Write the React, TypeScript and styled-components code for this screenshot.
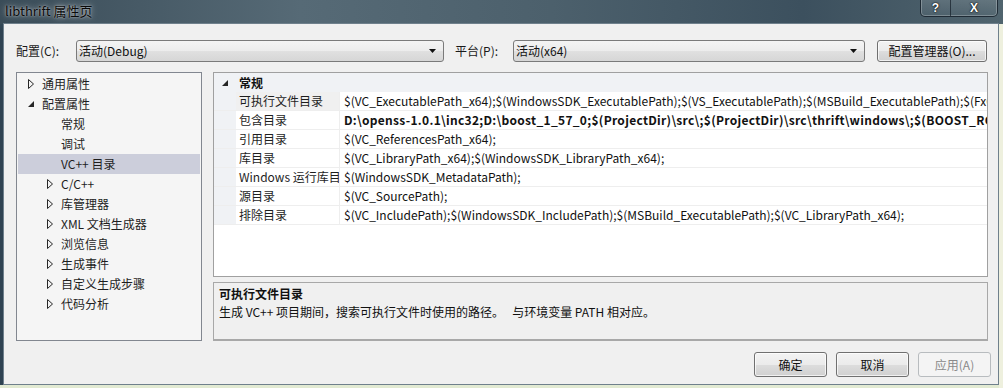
import React from 'react';
import styled, { createGlobalStyle } from 'styled-components';

const FONT = `"Noto Sans CJK SC", "Noto Sans", "Liberation Sans", sans-serif`;

const GlobalStyle = createGlobalStyle`
  html, body {
    margin: 0;
    padding: 0;
    background: #2f4251;
  }
  body {
    font-family: ${FONT};
    font-size: 12px;
    color: #1e1e1e;
  }
`;

const treeItems = [
  { label: '通用属性', level: 0, arrow: 'closed' },
  { label: '配置属性', level: 0, arrow: 'open' },
  { label: '常规', level: 1, arrow: 'none' },
  { label: '调试', level: 1, arrow: 'none' },
  { label: 'VC++ 目录', level: 1, arrow: 'none', selected: true },
  { label: 'C/C++', level: 1, arrow: 'closed' },
  { label: '库管理器', level: 1, arrow: 'closed' },
  { label: 'XML 文档生成器', level: 1, arrow: 'closed' },
  { label: '浏览信息', level: 1, arrow: 'closed' },
  { label: '生成事件', level: 1, arrow: 'closed' },
  { label: '自定义生成步骤', level: 1, arrow: 'closed' },
  { label: '代码分析', level: 1, arrow: 'closed' },
];

const props = [
  {
    name: '可执行文件目录',
    value:
      '$(VC_ExecutablePath_x64);$(WindowsSDK_ExecutablePath);$(VS_ExecutablePath);$(MSBuild_ExecutablePath);$(FxCopDir);$(PATH);',
    selected: true,
  },
  {
    name: '包含目录',
    value:
      'D:\\openss-1.0.1\\inc32;D:\\boost_1_57_0;$(ProjectDir)\\src\\;$(ProjectDir)\\src\\thrift\\windows\\;$(BOOST_ROOT);$(IncludePath)',
    bold: true,
  },
  { name: '引用目录', value: '$(VC_ReferencesPath_x64);' },
  { name: '库目录', value: '$(VC_LibraryPath_x64);$(WindowsSDK_LibraryPath_x64);' },
  { name: 'Windows 运行库目录', value: '$(WindowsSDK_MetadataPath);' },
  { name: '源目录', value: '$(VC_SourcePath);' },
  {
    name: '排除目录',
    value: '$(VC_IncludePath);$(WindowsSDK_IncludePath);$(MSBuild_ExecutablePath);$(VC_LibraryPath_x64);',
  },
];

function Arrow({ kind }: { kind: string }) {
  if (kind === 'open') {
    return (
      <svg width="6" height="6" viewBox="0 0 6 6">
        <polygon points="6,0 6,6 0,6" fill="#262626" />
      </svg>
    );
  }
  if (kind === 'closed') {
    return (
      <svg width="6" height="10" viewBox="0 0 6 10">
        <polygon points="0.5,0.5 5.5,5 0.5,9.5" fill="none" stroke="#262626" strokeWidth="1" />
      </svg>
    );
  }
  return null;
}

function DropArrow() {
  return (
    <svg width="7" height="4" viewBox="0 0 7 4">
      <polygon points="0,0 7,0 3.5,4" fill="#111" />
    </svg>
  );
}

export default function App() {
  return (
    <>
      <GlobalStyle />
      <Window>
        <TitleBar>
          <Title>libthrift 属性页</Title>
          <CaptionGroup>
            <CaptionButton $w={29}>?</CaptionButton>
            <CaptionButton $w={46}>X</CaptionButton>
          </CaptionGroup>
        </TitleBar>
        <Client>
          <Toolbar>
            <Label $w={60}>配置(C):</Label>
            <Combo $w={368}>
              <span>活动(Debug)</span>
              <DropArrow />
            </Combo>
            <Label $w={58} $ml={11}>
              平台(P):
            </Label>
            <Combo $w={352}>
              <span>活动(x64)</span>
              <DropArrow />
            </Combo>
            <Button $w={110} $ml={12}>
              配置管理器(O)...
            </Button>
          </Toolbar>

          <Main>
            <Tree>
              {treeItems.map(item => (
                <TreeRow key={item.label} $level={item.level} $selected={!!item.selected}>
                  <ArrowSlot>
                    <Arrow kind={item.arrow} />
                  </ArrowSlot>
                  <span>{item.label}</span>
                </TreeRow>
              ))}
            </Tree>

            <RightColumn>
              <Grid>
                <CategoryRow>
                  <Gutter>
                    <Arrow kind="open" />
                  </Gutter>
                  <CategoryName>常规</CategoryName>
                </CategoryRow>
                {props.map(p => (
                  <PropRow key={p.name}>
                    <Gutter />
                    <NameCell $selected={!!p.selected}>{p.name}</NameCell>
                    <ValueCell $bold={!!p.bold}>{p.value}</ValueCell>
                  </PropRow>
                ))}
              </Grid>
              <Description>
                <DescTitle>可执行文件目录</DescTitle>
                <DescText>生成 VC++ 项目期间，搜索可执行文件时使用的路径。&nbsp;&nbsp;&nbsp;与环境变量 PATH 相对应。</DescText>
              </Description>
            </RightColumn>
          </Main>

          <Footer>
            <Button $w={73}>确定</Button>
            <Button $w={73}>取消</Button>
            <Button $w={73} $disabled>
              应用(A)
            </Button>
          </Footer>
        </Client>
      </Window>
    </>
  );
}

const Window = styled.div`
  width: 1003px;
  height: 388px;
  display: flex;
  flex-direction: column;
  overflow: hidden;
  background:
    linear-gradient(90deg, transparent 999px, #eef0de 999px),
    linear-gradient(180deg, transparent 385px, #e2ead2 385px),
    linear-gradient(180deg, #5d6f7a 0px, #3b4f5e 14px, #2f4352 30px, #2f4352 100%);
`;

const TitleBar = styled.div`
  height: 24px;
  display: flex;
  align-items: flex-start;
  background: linear-gradient(90deg, #3a4c58 0%, #566a76 30%, #4c606c 55%, #3c505e 80%, #50646e 100%);
`;

const Title = styled.div`
  margin: 3px 0 0 5px;
  font-size: 13px;
  line-height: 16px;
  color: #0a0a0a;
  text-shadow: 0 0 6px rgba(255, 255, 255, 0.7), 0 0 2px rgba(255, 255, 255, 0.6);
`;

const CaptionGroup = styled.div`
  margin-left: auto;
  margin-right: 5px;
  display: flex;
  margin-top: -1px;
  border: 1px solid rgba(20, 30, 40, 0.8);
  border-top: none;
  border-radius: 0 0 5px 5px;
  box-shadow: inset 0 0 0 1px rgba(255, 255, 255, 0.25);
  overflow: hidden;
`;

const CaptionButton = styled.div<{ $w: number }>`
  width: ${p => p.$w}px;
  height: 17px;
  display: flex;
  align-items: center;
  justify-content: center;
  color: #fff;
  font-family: "Liberation Sans", sans-serif;
  font-weight: bold;
  font-size: 12px;
  text-shadow: 0 0 2px #000, 0 0 1px #000;
  background: linear-gradient(180deg, rgba(255, 255, 255, 0.12), rgba(255, 255, 255, 0.02));
  & + & {
    border-left: 1px solid rgba(20, 30, 40, 0.7);
  }
`;

const Client = styled.div`
  margin-left: 4px;
  width: 994px;
  height: 360px;
  box-sizing: border-box;
  background: #f0f0f0;
  box-shadow: 0 0 0 1px #6f808c;
  padding: 16px 10px 0 12px;
  display: flex;
  flex-direction: column;
`;

const Toolbar = styled.div`
  height: 22px;
  display: flex;
  align-items: center;
`;

const Label = styled.div<{ $w: number; $ml?: number }>`
  width: ${p => p.$w}px;
  margin-left: ${p => p.$ml ?? 0}px;
  line-height: 16px;
  color: #1a1a1a;
`;

const Combo = styled.div<{ $w: number }>`
  width: ${p => p.$w}px;
  height: 22px;
  box-sizing: border-box;
  border: 1px solid #7a7a7a;
  border-radius: 3px;
  background: linear-gradient(180deg, #f4f4f4 0%, #ececec 50%, #e0e0e0 51%, #d6d6d6 100%);
  display: flex;
  align-items: center;
  justify-content: space-between;
  padding: 0 7px 0 2px;
  line-height: 16px;
  color: #111;
`;

const Button = styled.div<{ $w: number; $ml?: number; $disabled?: boolean }>`
  width: ${p => p.$w}px;
  height: ${p => (p.$ml !== undefined ? 22 : 25)}px;
  margin-left: ${p => p.$ml ?? 0}px;
  box-sizing: border-box;
  border: 1px solid ${p => (p.$disabled ? '#b8bcbf' : '#707070')};
  border-radius: 3px;
  background: ${p =>
    p.$disabled
      ? '#f4f4f4'
      : 'linear-gradient(180deg, #f3f3f3 0%, #ebebeb 50%, #dddddd 51%, #d0d0d0 100%)'};
  box-shadow: ${p => (p.$disabled ? 'none' : 'inset 0 0 0 1px rgba(255,255,255,0.7)')};
  color: ${p => (p.$disabled ? '#8a8a8a' : '#111')};
  display: flex;
  align-items: center;
  justify-content: center;
  line-height: 16px;
`;

const Main = styled.div`
  margin-top: 10px;
  height: 269px;
  display: flex;
  gap: 11px;
`;

const Tree = styled.div`
  width: 186px;
  box-sizing: border-box;
  border: 1px solid #828790;
  background: #f5f5f5;
  padding-top: 1px;
`;

const TreeRow = styled.div<{ $level: number; $selected: boolean }>`
  height: 20px;
  margin: 0 1px;
  display: flex;
  align-items: center;
  padding-left: ${p => 10 + p.$level * 19}px;
  background: ${p => (p.$selected ? '#cccedb' : 'transparent')};
  line-height: 16px;
  color: #1e1e1e;
`;

const ArrowSlot = styled.div`
  width: 14px;
  display: flex;
  align-items: center;
`;

const RightColumn = styled.div`
  flex: 1;
  display: flex;
  flex-direction: column;
  gap: 5px;
  min-width: 0;
`;

const Grid = styled.div`
  height: 205px;
  box-sizing: border-box;
  border: 1px solid #a0a0a0;
  background: #fff;
  overflow: hidden;
`;

const CategoryRow = styled.div`
  height: 19px;
  display: flex;
  align-items: center;
  background: #f0f2f5;
`;

const Gutter = styled.div`
  width: 22px;
  flex-shrink: 0;
  align-self: stretch;
  display: flex;
  align-items: center;
  justify-content: flex-end;
  padding-right: 8px;
  box-sizing: border-box;
  background: #f0f2f5;
`;

const CategoryName = styled.div`
  padding-left: 3px;
  font-weight: bold;
  line-height: 16px;
  color: #111;
`;

const PropRow = styled.div`
  height: 19px;
  display: flex;
  border-bottom: 1px solid #eeeeee;
  box-sizing: border-box;
`;

const NameCell = styled.div<{ $selected: boolean }>`
  width: 104px;
  flex-shrink: 0;
  box-sizing: border-box;
  padding-left: 3px;
  border-right: 1px solid #eeeeee;
  background: ${p => (p.$selected ? '#f0f0f0' : '#fff')};
  line-height: 18px;
  white-space: nowrap;
  overflow: hidden;
  color: #1e1e1e;
`;

const ValueCell = styled.div<{ $bold: boolean }>`
  flex: 1;
  padding-left: 4px;
  line-height: 18px;
  white-space: nowrap;
  overflow: hidden;
  font-weight: ${p => (p.$bold ? 'bold' : 'normal')};
  letter-spacing: ${p => (p.$bold ? '0.3px' : '0')};
  color: #111;
`;

const Description = styled.div`
  height: 59px;
  box-sizing: border-box;
  border: 1px solid #a8a8a8;
  border-bottom-width: 2px;
  background: #f0f0f0;
  padding: 2px 5px;
`;

const DescTitle = styled.div`
  font-weight: bold;
  line-height: 18px;
  color: #111;
`;

const DescText = styled.div`
  line-height: 18px;
  color: #111;
`;

const Footer = styled.div`
  margin-top: 11px;
  margin-right: -3px;
  display: flex;
  justify-content: flex-end;
  gap: 9px;
`;
